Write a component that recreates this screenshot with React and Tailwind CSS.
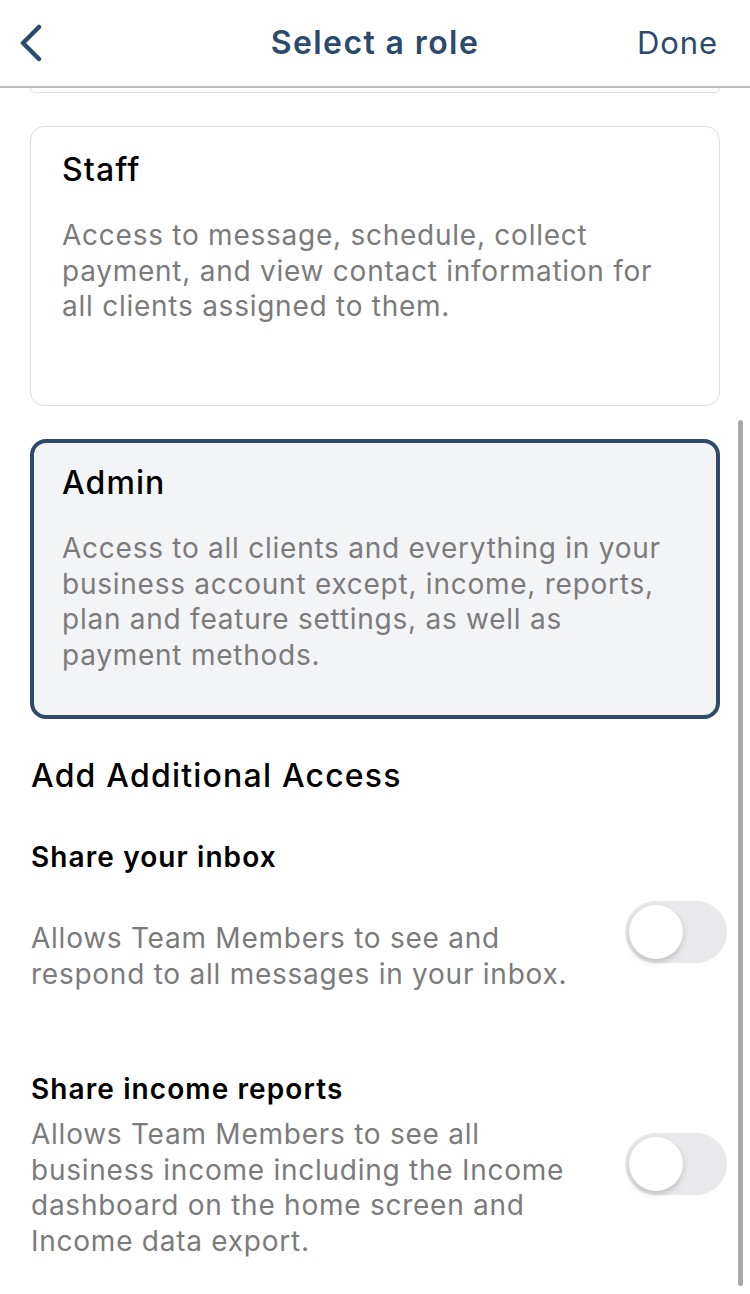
import React from 'react';

const Toggle = ({ className = '' }) => (
  <div className={`relative w-[102px] h-[62px] rounded-full bg-[#e9e9eb] shrink-0 ${className}`}>
    <div className="absolute left-[4px] top-[4px] w-[54px] h-[54px] rounded-full bg-white shadow-[0_3px_6px_rgba(0,0,0,0.18)]"></div>
  </div>
);

const App = () => {
  return (
    <div className="relative w-[750px] h-[1294px] overflow-hidden bg-white font-['Inter','Noto_Sans',sans-serif]">
      {/* Header */}
      <header className="relative h-[88px] border-b-2 border-[#bdbdbd] flex items-center justify-between px-[18px]">
        <svg width="26" height="38" viewBox="0 0 26 38" className="ml-[0px]">
          <path d="M21 3 L5 19 L21 35" fill="none" stroke="#2c4a6d" strokeWidth="4.5" strokeLinecap="round" strokeLinejoin="round" />
        </svg>
        <h1 className="absolute left-0 right-0 text-center text-[32px] font-semibold text-[#2c4a6d] tracking-[1.4px] pointer-events-none">
          Select a role
        </h1>
        <span className="text-[31px] text-[#2c4a6d] tracking-[0.9px] mr-[14px]">Done</span>
      </header>

      {/* Scrolled content */}
      <main className="px-[30px]">
        <div className="h-[5px] border border-t-0 border-[#dedede] rounded-b-[12px]"></div>

        {/* Staff */}
        <div className="mt-[33px] h-[280px] border border-[#dcdcdc] rounded-[14px] pt-[25px] pl-[31px] pr-[10px]">
          <h2 className="text-[32px] leading-[36px] font-medium tracking-[1.1px] text-black">Staff</h2>
          <p className="mt-[30px] text-[28px] leading-[35.5px] tracking-[0.75px] text-[#7b7b7b] whitespace-nowrap">
            Access to message, schedule, collect<br />
            payment, and view contact information for<br />
            all clients assigned to them.
          </p>
        </div>

        {/* Admin */}
        <div className="mt-[33px] h-[280px] border-4 border-[#2d4a6b] bg-[#f3f4f6] rounded-[16px] pt-[22px] pl-[28px] pr-[10px]">
          <h2 className="text-[32px] leading-[36px] font-medium tracking-[1.1px] text-black">Admin</h2>
          <p className="mt-[30px] text-[28px] leading-[35.5px] tracking-[0.75px] text-[#7b7b7b] whitespace-nowrap">
            Access to all clients and everything in your<br />
            business account except, income, reports,<br />
            plan and feature settings, as well as<br />
            payment methods.
          </p>
        </div>

        {/* Additional access */}
        <h3 className="mt-[37px] pl-[1px] text-[32px] leading-[40px] font-medium tracking-[1.2px] text-black">Add Additional Access</h3>

        <div className="mt-[43px] pl-[1px]">
          <h4 className="text-[28px] leading-[36px] font-semibold tracking-[1.1px] text-black">Share your inbox</h4>
          <div className="flex items-start justify-between">
            <p className="mt-[46px] text-[28px] leading-[35.5px] tracking-[0.75px] text-[#7b7b7b] whitespace-nowrap">
              Allows Team Members to see and<br />
              respond to all messages in your inbox.
            </p>
            <Toggle className="mt-[26px] mr-[-7px]" />
          </div>
        </div>

        <div className="mt-[79px] pl-[1px]">
          <h4 className="text-[28px] leading-[36px] font-semibold tracking-[1.1px] text-black">Share income reports</h4>
          <div className="flex items-start justify-between">
            <p className="mt-[10px] text-[28px] leading-[35.5px] tracking-[0.75px] text-[#7b7b7b] whitespace-nowrap">
              Allows Team Members to see all<br />
              business income including the Income<br />
              dashboard on the home screen and<br />
              Income data export.
            </p>
            <Toggle className="mt-[26px] mr-[-7px]" />
          </div>
        </div>
      </main>

      {/* Scroll indicator */}
      <div className="absolute right-[7px] top-[420px] w-[5px] h-[866px] rounded-full bg-[#a8a8a8]"></div>
    </div>
  );
};

export default App;
